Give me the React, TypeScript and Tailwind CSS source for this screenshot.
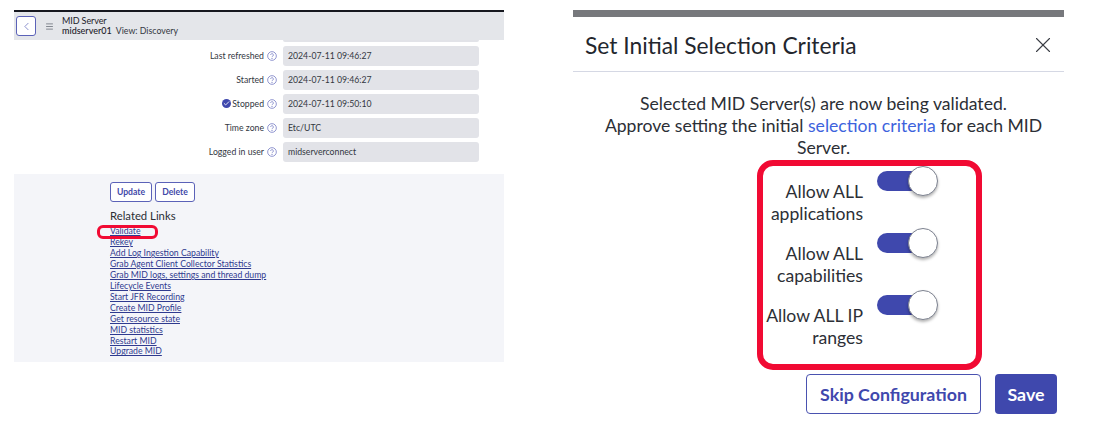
import { ChevronLeft, Menu, X, Check } from "lucide-react";

const fields = [
  { label: "Last refreshed", value: "2024-07-11 09:46:27" },
  { label: "Started", value: "2024-07-11 09:46:27" },
  { label: "Stopped", value: "2024-07-11 09:50:10", badge: true },
  { label: "Time zone", value: "Etc/UTC" },
  { label: "Logged in user", value: "midserverconnect" },
];

const links = [
  "Rekey",
  "Add Log Ingestion Capability",
  "Grab Agent Client Collector Statistics",
  "Grab MID logs, settings and thread dump",
  "Lifecycle Events",
  "Start JFR Recording",
  "Create MID Profile",
  "Get resource state",
  "MID statistics",
  "Restart MID",
  "Upgrade MID",
];

const toggles = [
  ["Allow ALL", "applications"],
  ["Allow ALL", "capabilities"],
  ["Allow ALL IP", "ranges"],
];

function HelpIcon() {
  return (
    <svg viewBox="0 0 12 12" className="w-[10px] h-[10px] shrink-0 text-[#5b62b8]" fill="none" stroke="currentColor" strokeWidth="0.8">
      <circle cx="6" cy="6" r="5.2" />
      <path d="M4.4 4.8a1.6 1.6 0 1 1 2.5 1.3c-.6.4-.9.7-.9 1.3" />
      <circle cx="6" cy="9" r="0.3" />
    </svg>
  );
}

function MidServerForm() {
  return (
    <div className="w-[490px] shrink-0 font-['Lato',sans-serif]">
      <div className="border-t-2 border-[#16181f] bg-[#e4e6ea] h-[30px] flex items-center pl-[2px]">
        <div className="w-[20px] h-[20px] rounded-[3px] border border-[#5b62b8] bg-white flex items-center justify-center text-[#4f56b3]">
          <ChevronLeft className="w-[13px] h-[13px]" strokeWidth={1.2} />
        </div>
        <Menu className="w-[9px] h-[9px] ml-[9px] text-[#555b66]" strokeWidth={1.8} />
        <div className="ml-[8px] text-[9px] leading-[10px] text-[#1d2129]">
          <div className="tracking-[-0.1px]">MID Server</div>
          <div>
            <span className="font-medium">midserver01</span>
            <span className="ml-[4px] text-[8.8px] text-[#33373f]">View: Discovery</span>
          </div>
        </div>
      </div>

      <div className="h-[134px] bg-white">
        <div className="ml-[269px] w-[196px] h-[2px] bg-[#e2e3e8] rounded-b-[3px]" />
        <div className="flex flex-col gap-[4px] pt-[4px]">
          {fields.map((f) => (
            <div key={f.label} className="flex items-center h-[20px]">
              <div className="w-[263px] flex items-center justify-end gap-[3px] text-[8.7px] text-[#33373f]">
                {f.badge && (
                  <span className="w-[9px] h-[9px] -mr-[2px] rounded-full bg-[#3f48ad] flex items-center justify-center text-white">
                    <Check className="w-[7px] h-[7px]" strokeWidth={3} />
                  </span>
                )}
                <span>{f.label}</span>
                <HelpIcon />
              </div>
              <div className="ml-[6px] w-[196px] h-[20px] rounded-[3px] bg-[#e2e3e8] flex items-center pl-[5px] text-[8.7px] text-[#33373f]">
                {f.value}
              </div>
            </div>
          ))}
        </div>
      </div>

      <div className="h-[188px] bg-[#f4f5f9] pl-[96px] pt-[8px]">
        <div className="flex gap-[3px]">
          <button className="w-[42px] h-[20px] rounded-[3px] border border-[#5b62b8] bg-white text-[8.6px] font-bold text-[#4148a8]">Update</button>
          <button className="w-[40px] h-[20px] rounded-[3px] border border-[#5b62b8] bg-white text-[8.6px] font-bold text-[#4148a8]">Delete</button>
        </div>
        <div className="mt-[7px] text-[11.3px] leading-[14px] text-[#2b2e35]">Related Links</div>
        <div className="mt-[3px] text-[8.7px] leading-[10.95px] text-[#2f3a8f] underline">
          <div className="relative">
            Validate
            <span className="absolute left-[-13px] top-[-1px] w-[61px] h-[14px] rounded-[6px] border-[3px] border-[#f10a33]" />
          </div>
          {links.map((l) => (
            <div key={l}>{l}</div>
          ))}
        </div>
      </div>
    </div>
  );
}

function SelectionDialog() {
  return (
    <div className="ml-[69px] w-[491px] shrink-0 font-['Lato',sans-serif] text-[#2c2f36]">
      <div className="h-[7px] bg-[#77787c]" />
      <div className="h-[55px] pt-[2px] border-b border-[#d5d8e4] flex items-center justify-between pl-[12px] pr-[8px]">
        <span className="text-[22.8px] text-[#23262d]">Set Initial Selection Criteria</span>
        <X className="w-[26px] h-[26px] text-[#3a3d44]" strokeWidth={1} />
      </div>
      <div className="pt-[21px] pl-[10px] text-center text-[17.6px] leading-[22px]">
        <div>Selected MID Server(s) are now being validated.</div>
        <div>
          Approve setting the initial <span className="text-[#3d63dd]">selection criteria</span> for each MID
        </div>
        <div>Server.</div>
      </div>
      <div className="ml-[184px] mt-[1px] w-[225px] h-[210px] rounded-[16px] border-[6px] border-[#f10a33] flex flex-col gap-[3px]">
        {toggles.map(([a, b]) => (
          <div key={b} className="flex items-start">
            <div className="w-[100px] pt-[15px] text-right text-[17.6px] leading-[22px] text-[#2c2f36]">
              {a}
              <br />
              {b}
            </div>
            <div className="ml-[14px] relative w-[61px] h-[30px]">
              <div className="mt-[5px] w-[48px] h-[20px] rounded-full bg-[#3f48ad]" />
              <div className="absolute right-0 top-0 w-[30px] h-[30px] rounded-full bg-white border border-[#7d8290] shadow-[0_2px_3px_rgba(0,0,0,0.3)]" />
            </div>
          </div>
        ))}
      </div>
      <div className="flex ml-[233px] mt-[4px] gap-[14px]">
        <button className="w-[175px] h-[40px] rounded-[4px] border border-[#4a52b0] bg-white text-[17.8px] font-bold text-[#3f48ad]">Skip Configuration</button>
        <button className="w-[62px] h-[40px] rounded-[4px] bg-[#3f48ad] text-[17.8px] font-bold text-white">Save</button>
      </div>
    </div>
  );
}

export default function App() {
  return (
    <div className="w-[1096px] h-[428px] bg-white flex items-start pl-[14px] pt-[10px] overflow-hidden">
      <MidServerForm />
      <SelectionDialog />
    </div>
  );
}
